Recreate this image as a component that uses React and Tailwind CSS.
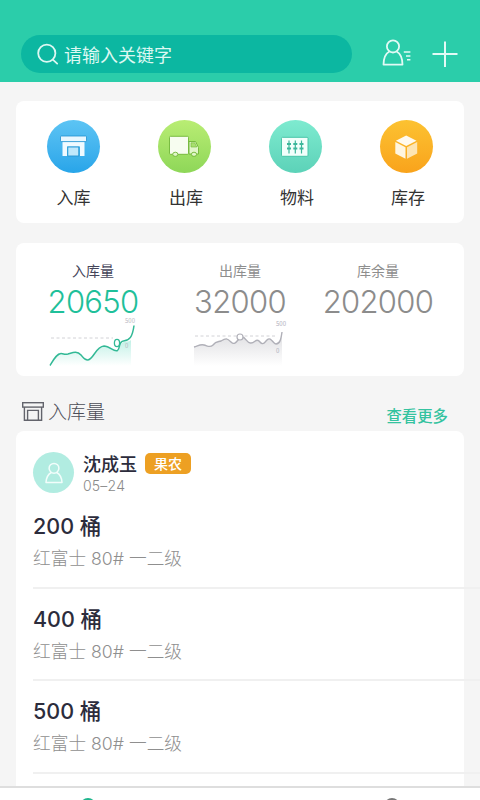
import clsx from "clsx";

// ── Icons ─────────────────────────────────────────────────────
function SearchIcon() {
  return (
    <svg width="22" height="22" viewBox="0 0 22 22" fill="none" stroke="#dcf8f2" strokeWidth="1.8" strokeLinecap="round">
      <circle cx="9.8" cy="10.2" r="8.6" />
      <path d="M15.8 16.6l4.4 4" />
    </svg>
  );
}

function ContactIcon() {
  return (
    <svg width="30" height="28" viewBox="0 0 30 28" fill="none" stroke="#e2faf5" strokeWidth="1.8" strokeLinejoin="round">
      <circle cx="11" cy="7.4" r="6.1" />
      <path d="M7.4 12.5C3.6 14.6 1.6 19 1.5 25.6h19C20.400 19 18.400 14.600 14.600 12.500" />
      <path d="M21.800 13h6.600M24 17h4.400M25 20.800h3.400" strokeWidth="1.600" />
    </svg>
  );
}

function PlusIcon() {
  return (
    <svg width="26" height="26" viewBox="0 0 26 26" fill="none" stroke="#e2faf5" strokeWidth="2">
      <path d="M13 0.500v25.500M0.500 13h25" />
    </svg>
  );
}

function StoreIcon() {
  return (
    <svg width="52" height="52" viewBox="0 0 52 52">
      <path d="M15.500 21.500h22v14.500h-4.500v-9.500h-13v9.500h-4.500z" fill="#f0faff" />
      <rect x="13.500" y="16" width="26" height="5.600" rx="0.800" fill="#e8f7ff" stroke="#2090cf" strokeWidth="0.800" />
      <rect x="20.800" y="27" width="11" height="9" fill="#bfe8fb" stroke="#2496d2" strokeWidth="0.900" />
    </svg>
  );
}

function TruckIcon() {
  return (
    <svg width="52" height="52" viewBox="0 0 52 52" stroke="#6fb535" strokeWidth="0.900" strokeLinejoin="round">
      <path d="M31 21.500h6.500l3 6v6.500H31z" fill="#e0f6c8" />
      <path d="M33 22.800h3.800l2 4.200H33z" fill="#a9e070" strokeWidth="0.600" />
      <rect x="11.500" y="16.300" width="19" height="18" rx="1" fill="#f7fdf0" />
      <ellipse cx="17.300" cy="34.300" rx="2.600" ry="2.100" fill="#e0f6c8" />
      <ellipse cx="36" cy="34.300" rx="2.600" ry="2.100" fill="#e0f6c8" />
    </svg>
  );
}

function MaterialIcon() {
  return (
    <svg width="52" height="52" viewBox="0 0 52 52" fill="none" stroke="#3cb79b" strokeWidth="1.200">
      <rect x="12.500" y="17.300" width="26.500" height="19" rx="1" fill="#f2fffb" stroke="#48c5a8" strokeWidth="1" />
      <path d="M20 20.500v13M26.300 20.500v13M32.500 20.500v13" />
      <path d="M18 24h4M18 28.500h4M24.300 24h4M24.300 28.500h4M30.500 24h4M30.500 28.500h4" strokeWidth="1.800" />
    </svg>
  );
}

function BoxIcon() {
  return (
    <svg width="52" height="52" viewBox="0 0 52 52">
      <path d="M26.200 15.500l10.300 5.300-10.300 5.300-10.300-5.300z" fill="#fffaf0" />
      <path d="M15.300 22l10.200 5.200v11.600l-10.200-5.200z" fill="#fff6e0" />
      <path d="M37.200 22L27 27.200v11.600l10.200-5.200z" fill="#fde5b4" />
    </svg>
  );
}

function ArchiveIcon() {
  return (
    <svg width="22" height="19" viewBox="0 0 22 19" fill="none" stroke="#63646c" strokeWidth="1.400">
      <rect x="0.700" y="0.700" width="20.600" height="4.400" />
      <path d="M2.400 5.100v13.200h17.200V5.100" />
      <path d="M5.600 18.300V8.400h10.800v9.900" />
    </svg>
  );
}

function AvatarIcon() {
  return (
    <svg width="20" height="24" viewBox="0 0 20 24" fill="none" stroke="#f2fdfb" strokeWidth="1.500" strokeLinejoin="round">
      <circle cx="10" cy="7.300" r="4.900" />
      <path d="M7.300 11.500C4 13.400 2.200 16.600 2 21.600h16c-.2-5-2-8.200-5.300-10.100" />
    </svg>
  );
}

// ── Charts ────────────────────────────────────────────────────
function InChart() {
  return (
    <svg width="92" height="52" viewBox="0 0 92 52" fill="none">
      <defs>
        <linearGradient id="inFill" x1="0" y1="0" x2="0" y2="1">
          <stop offset="0" stopColor="#2bcdaa" stopOpacity="0.300" />
          <stop offset="1" stopColor="#2bcdaa" stopOpacity="0" />
        </linearGradient>
      </defs>
      <path d="M4 20h62" stroke="#d2d2d6" strokeDasharray="3 2.500" />
      <path d="M3 47C7 41 10 35.500 14 35.500c3 0 3 1.500 7 .5 5-1.500 9-3.500 13 1 3 3.500 3.500 5.500 7 5.500 6 0 9-14.500 17-14.500 6 0 10 6.500 13 4.500 3-2.500 2-7.500 6-8.500 4-1 7 0 7-3v27H3z" fill="url(#inFill)" />
      <path d="M3 47.500C7 41 10 35.500 14 35.500c3 0 3 1.500 7 .5 5-1.500 9-3.500 13 1 2.500 3 3.500 5 6.500 5 6 0 8-13.500 16.500-14 6 0 10 6.500 13.500 4.500 3-2.500 1-9 6-9.500 6-.5 9-4 10.500-15.500" stroke="#33b996" strokeWidth="1.500" />
      <ellipse cx="70" cy="25" rx="2.600" ry="3.700" fill="#fff" stroke="#33b996" strokeWidth="1.300" />
      <text x="78" y="5" fontSize="6" fill="#b9b9c2">500</text>
      <text x="78" y="30" fontSize="6" fill="#b9b9c2">0</text>
    </svg>
  );
}

function OutChart() {
  return (
    <svg width="96" height="52" viewBox="0 0 96 52" fill="none">
      <defs>
        <linearGradient id="outFill" x1="0" y1="0" x2="0" y2="1">
          <stop offset="0" stopColor="#b4b4bb" stopOpacity="0.450" />
          <stop offset="1" stopColor="#b4b4bb" stopOpacity="0" />
        </linearGradient>
      </defs>
      <path d="M3 18h82" stroke="#d2d2d6" strokeDasharray="3 2.500" />
      <path d="M2 29c4-1 6-3 10-2 4 1 6 3 9 0 3-4 5-3 8-4 5-3 6-3 10 1 5 5 7-5 11-5 4 0 5 7 9 6 4 0 5-5 8-2 4 5 5 2 8-1 4-4 6 4 9 4 4 0 5-5 6-12v34H2z" fill="url(#outFill)" />
      <path d="M2 29c4-1 6-3 10-2 4 1 6 3 9 0 3-4 5-3 8-4 5-3 6-3 10 1 5 5 7-5 11-5 4 0 5 7 9 6 4 0 5-5 8-2 4 5 5 2 8-1 4-4 6 4 9 4 4 0 5-5 6-12" stroke="#b0b0b8" strokeWidth="1.400" />
      <circle cx="48" cy="19" r="3" fill="#fff" stroke="#b0b0b8" strokeWidth="1.200" />
      <text x="84" y="8" fontSize="6" fill="#b0b0bc">500</text>
      <text x="84" y="35" fontSize="6" fill="#b0b0bc">0</text>
    </svg>
  );
}

// ── Data ──────────────────────────────────────────────────────
const menu = [
  { label: "入库", icon: StoreIcon, bg: "from-[#5cc4f4] to-[#27a5e9]", shift: "" },
  { label: "出库", icon: TruckIcon, bg: "from-[#b9ed74] to-[#8ed758]", shift: "pl-[3px]" },
  { label: "物料", icon: MaterialIcon, bg: "from-[#7eebd0] to-[#5cd2b8]", shift: "pl-[3px]" },
  { label: "库存", icon: BoxIcon, bg: "from-[#fcc231] to-[#f9a31b]", shift: "pl-[3px]" },
];

const records = ["200", "400", "500"];

function Stat({ label, value, active, className, children }) {
  return (
    <div className={clsx("flex flex-col items-center", className)}>
      <span className={clsx("h-5 text-sm leading-5", active ? "text-[#45455a]" : "text-[#8e8e8e]")}>{label}</span>
      <span
        className={clsx(
          "mt-[6px] h-8 font-['Inter','Liberation_Sans',sans-serif] text-[31px] leading-8 font-light tracking-[-0.7px]",
          active ? "text-[#1fc09a]" : "text-[#8c8c8c]"
        )}
      >
        {value}
      </span>
      {children}
    </div>
  );
}

export default function App() {
  return (
    <div className="flex h-[800px] w-[480px] flex-col overflow-hidden bg-[#f5f5f5] font-['Noto_Sans_CJK_SC',sans-serif]">
      {/* Header */}
      <header className="flex h-[82px] shrink-0 items-start bg-[#2bcdaa] pt-[35px] pl-[21px]">
        <div className="flex h-[38px] w-[331px] items-center rounded-full bg-[#0cb7a1] pl-4">
          <SearchIcon />
          <span className="ml-[5px] text-[18px] leading-[38px] text-[#dcf8f2]">请输入关键字</span>
        </div>
        <div className="ml-[30px] flex items-start pt-1">
          <ContactIcon />
          <div className="ml-5 pt-[2px]"><PlusIcon /></div>
        </div>
      </header>

      {/* Menu */}
      <section className="mx-4 mt-[19px] grid h-[122px] shrink-0 grid-cols-[111px_111px_111px_111px] rounded-lg bg-white pt-[19px] pl-[2px]">
        {menu.map(({ label, icon: Icon, bg, shift }) => (
          <div key={label} className="flex flex-col items-center">
            <div className={clsx("size-[53px] rounded-full bg-linear-to-b", bg)}>
              <Icon />
            </div>
            <span className={clsx("mt-3 text-[17px] leading-6 text-[#333]", shift)}>{label}</span>
          </div>
        ))}
      </section>

      {/* Stats */}
      <section className="mx-4 mt-5 flex h-[133px] shrink-0 rounded-lg bg-white pt-[17px]">
        <Stat label="入库量" value="20650" active className="ml-[31px] w-[92px]">
          <InChart />
        </Stat>
        <Stat label="出库量" value="32000" className="ml-[53px] w-[96px]">
          <OutChart />
        </Stat>
        <Stat label="库余量" value="202000" className="ml-[33px] w-[114px]" />
      </section>

      {/* List title */}
      <div className="flex h-[55px] shrink-0 pt-[26px] pr-8 pl-[22px]">
        <ArchiveIcon />
        <span className="ml-1 -mt-[3px] h-6 text-[19px] leading-6 font-light text-[#4c4d57]">入库量</span>
        <span className="mt-[1px] ml-auto h-6 text-[15.400px] leading-6 font-medium text-[#35c3a0]">查看更多</span>
      </div>

      {/* List */}
      <section className="mx-4 flex-1 rounded-t-lg bg-white pt-[21px] pl-[17px]">
        <div className="flex h-[44px]">
          <div className="flex size-[41px] items-center justify-center rounded-full bg-[#b1ece1]">
            <AvatarIcon />
          </div>
          <div className="ml-[9px]">
            <div className="flex h-[22px] items-center">
              <span className="text-[18px] leading-[22px] font-medium text-[#2c2c3c]">沈成玉</span>
              <span className="ml-2 h-[21px] w-[46px] rounded-[5px] bg-[#eda023] text-center text-[14px] leading-[21px] font-medium text-white">果农</span>
            </div>
            <div className="mt-[2px] font-['Inter',sans-serif] text-[14px] leading-5 font-light tracking-[0.2px] text-[#8a8a8a]">05–24</div>
          </div>
        </div>
        {records.map((count) => (
          <div key={count} className="-mr-4 h-[92.500px] border-b-2 border-[#f0f0f0] pt-[16px]">
            <div className="h-7 font-['Inter','Noto_Sans_CJK_SC',sans-serif] text-[21.500px] leading-7 font-medium whitespace-pre text-[#2c2c3c]">
              {count} 桶
            </div>
            <div className="mt-[7px] h-6 font-['Inter','Noto_Sans_CJK_SC',sans-serif] text-[17.700px] leading-6 font-light text-[#8f8f8f]">
              红富士 80# 一二级
            </div>
          </div>
        ))}
      </section>

      {/* Tab bar, mostly below the fold */}
      <nav className="flex h-[14px] shrink-0 overflow-hidden border-t-2 border-[#dedede] bg-white pt-[10px]">
        <div className="ml-[80px] size-4 rounded-full bg-[#1fb58d]" />
        <div className="ml-[288px] size-4 rounded-full border-2 border-[#777]" />
      </nav>
    </div>
  );
}
